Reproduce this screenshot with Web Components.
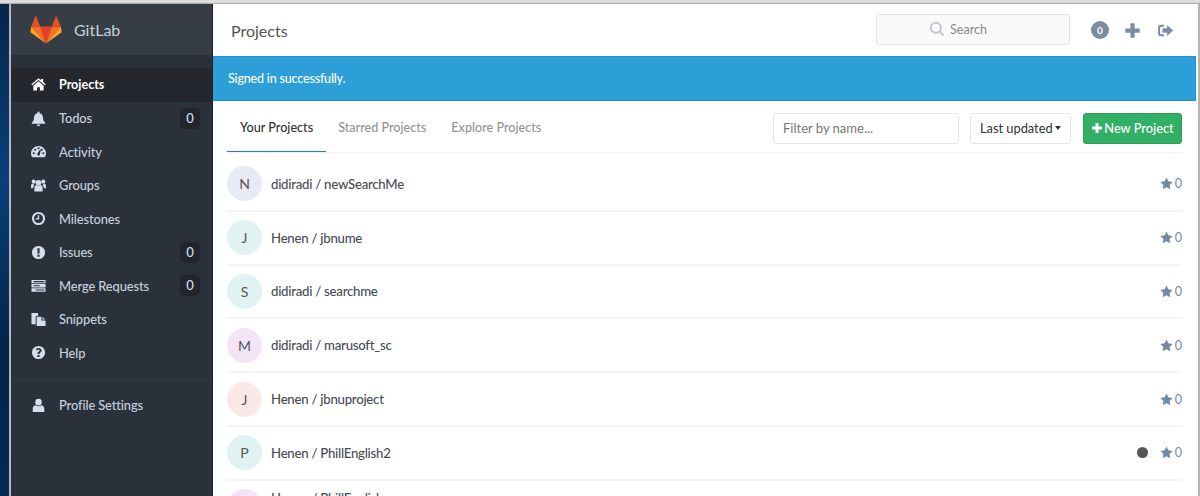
<!DOCTYPE html>
<html>
<head>
<meta charset="utf-8">
<title>Projects</title>
<style>
  html, body { margin: 0; height: 100%; overflow: hidden; background: #fff; }
  body { font-family: "Lato", "Liberation Sans", sans-serif; }
</style>
</head>
<body>
<gl-app></gl-app>
<script>
const ICONS = {
  home: '<path d="M8 1.200 0.300 7.800l1 1.100L8 3.100l6.700 5.800 1-1.100-2.800-2.400V2h-2.200v1.500z"/><path d="M2.500 9.400 8 4.600l5.500 4.800V14.500H9.500v-3.600h-3v3.600H2.500z"/>',
  bell: '<path d="M8 .6a1.100 1.100 0 0 1 1.100 1.100v.6c2.400.5 3.700 2.400 3.700 4.900 0 2.900.9 4 2.400 5.300v1H.8v-1c1.500-1.300 2.400-2.400 2.400-5.300 0-2.500 1.300-4.400 3.700-4.900v-.6A1.100 1.100 0 0 1 8 .6z"/><path d="M6.200 14.300h3.600a1.800 1.800 0 0 1-3.600 0z"/>',
  gauge: '<path fill-rule="evenodd" d="M8 2C3.600 2 0 5.500 0 9.900c0 1.300.3 2.500.9 3.600.1.300.4.500.8.500h12.600c.4 0 .7-.2.800-.5.600-1.100.9-2.300.9-3.600C16 5.500 12.400 2 8 2zM2.900 10.900a1.100 1.100 0 1 1 0-2.200 1.100 1.100 0 0 1 0 2.200zm1.500-3.600a1.100 1.100 0 1 1 0-2.200 1.100 1.100 0 0 1 0 2.200zM8 5.700a1.100 1.100 0 1 1 0-2.200 1.100 1.100 0 0 1 0 2.200zm1.300 6.300a1.600 1.600 0 0 1-2.500-1.900l3-4.500.9.300-1.300 5.300c.2.300.1.600-.1.800zm2.300-4.700a1.100 1.100 0 1 1 0-2.200 1.100 1.100 0 0 1 0 2.200zm1.500 3.600a1.100 1.100 0 1 1 0-2.200 1.100 1.100 0 0 1 0 2.200z"/>',
  users: '<circle cx="8" cy="5" r="3"/><circle cx="2.900" cy="3.900" r="2.200"/><circle cx="13.100" cy="3.900" r="2.200"/><path d="M3.600 14.500V10.500c0-2 1.200-3 2.400-3 .5.500 1.200.8 2 .8s1.500-.3 2-.8c1.200 0 2.400 1 2.400 3v4z"/><path d="M0 11V8.100C0 6.800.8 6 1.700 6c.4.400.9.600 1.500.6.200.5.300 1 .3 1.400-.9.600-1.300 1.600-1.300 3zM16 11V8.100c0-1.300-.8-2.100-1.700-2.100-.4.400-.9.600-1.500.6-.2.500-.3 1-.3 1.400.9.600 1.300 1.600 1.300 3z"/>',
  clock: '<path fill-rule="evenodd" d="M8 1a7 7 0 1 0 0 14A7 7 0 0 0 8 1zm0 2.200a4.800 4.800 0 1 1 0 9.600 4.800 4.800 0 0 1 0-9.600z"/><path d="M7.200 4.600h1.500v4.400H5V7.600h2.200z"/>',
  issue: '<path fill-rule="evenodd" d="M8 1a7 7 0 1 0 0 14A7 7 0 0 0 8 1zM6.800 3.500h2.400l-.2 5.900H7zM6.800 10.300h2.400v2.200H6.800z"/>',
  list: '<path fill-rule="evenodd" d="M.5 2h15v3.700H.5zm2.200 1.300v1.100h11.500V3.300zM.5 6.500h15v3.700H.5zm2.200 1.300v1.100h6.500V7.800zM.5 11h15v3.700H.5zm4.500 1.300v1.100h9.200v-1.100z"/>',
  copy: '<path d="M.5 1h7v3.200H5V13H.5z"/><path d="M6 5h5.200v4h4.300v6H6z"/><path d="M12.300 5.200l3 2.800h-3z"/>',
  question: '<path fill-rule="evenodd" d="M8 1a7 7 0 1 0 0 14A7 7 0 0 0 8 1zM6.900 10.600h2.200v2.100H6.900zM9 9.600H7v-.7c0-1.900 2.100-2 2.100-3.100 0-.5-.5-.9-1.100-.9-.6 0-1.100.4-1.500 1L5 4.800C5.700 3.700 6.800 3.100 8.100 3.100c1.700 0 3.200 1.100 3.200 2.700 0 2.300-2.300 2.300-2.300 3.800z"/>',
  user: '<circle cx="8" cy="4.400" r="3.500"/><path d="M1.800 14.800v-3c0-2.300 1.500-4 3.200-4 .8.700 1.900 1.100 3 1.100s2.200-.4 3-1.100c1.700 0 3.200 1.700 3.200 4v3z"/>',
  search: '<path fill-rule="evenodd" d="M6.800.8a6 6 0 1 0 3.500 10.900l3.400 3.400 1.500-1.500-3.400-3.400A6 6 0 0 0 6.800.8zm0 2a4 4 0 1 1 0 8 4 4 0 0 1 0-8z"/>',
  plus: '<path d="M6 1.200h4V6h4.800v4H10v4.800H6V10H1.200V6H6z"/>',
  signout: '<path d="M6.500 2.500H3.700A2.700 2.700 0 0 0 1 5.200v5.600a2.700 2.700 0 0 0 2.700 2.700h2.800v-1.900H3.900a1 1 0 0 1-1-1V5.400a1 1 0 0 1 1-1h2.600z"/><path d="M9.500 2.800 15.200 8l-5.700 5.200v-3H5.200V5.800h4.300z"/>',
  star: '<path d="M8 .5l2.300 4.800 5.300.8-3.800 3.700.9 5.300L8 12.600l-4.700 2.500.9-5.300L.4 6.100l5.300-.8z"/>'
};

function svgIcon(name, size) {
  return `<svg width="${size}" height="${size}" viewBox="0 0 16 16" fill="currentColor" aria-hidden="true">${ICONS[name]}</svg>`;
}

class GlNavItem extends HTMLElement {
  constructor() {
    super();
    const badge = this.getAttribute("badge");
    this.attachShadow({ mode: "open" }).innerHTML = `
      <style>
        :host {
          display: flex;
          align-items: center;
          height: 33.5px;
          padding: 0 12px 0 20px;
          color: #c5d0de;
          font-size: 12.900px;
          font-weight: 500;
          letter-spacing: -0.12px;
        }
        :host([active]) {
          background: #24272d;
          color: #fff;
          font-weight: 700;
          font-size: 12.500px;
          letter-spacing: 0;
        }
        .icon { width: 15px; display: flex; justify-content: center; margin-right: 13px; color: #d5deeb; }
        :host([active]) .icon { color: #fff; }
        .label { flex: 1; }
        .badge {
          width: 20px;
          height: 21px;
          line-height: 21px;
          text-align: center;
          border-radius: 5px;
          background: #22262c;
          color: #d5deeb;
          font-size: 13px;
        }
      </style>
      <span class="icon">${svgIcon(this.getAttribute("icon"), 15)}</span>
      <span class="label"><slot></slot></span>
      ${badge ? `<span class="badge">${badge}</span>` : ""}
    `;
  }
}
customElements.define("gl-nav-item", GlNavItem);

class GlSidebar extends HTMLElement {
  constructor() {
    super();
    this.attachShadow({ mode: "open" }).innerHTML = `
      <style>
        :host {
          display: flex;
          flex-direction: column;
          box-sizing: border-box;
          width: 202px;
          flex: none;
          background: #2b313a;
          border-right: 1px solid #1c2026;
        }
        .brand {
          display: flex;
          align-items: center;
          height: 51px;
          padding-left: 19px;
          gap: 12px;
          background: #363d47;
          color: #c5d0de;
          font-size: 16px;
        }
        nav { padding-top: 13px; }
      </style>
      <div class="brand">
        <svg width="32" height="29" viewBox="0 0 33 30" aria-hidden="true">
          <path fill="#e24329" d="M16.500 29.500 10.500 12h12z"/>
          <path fill="#fc6d26" d="M16.500 29.500 1.200 12H10.500z"/>
          <path fill="#fc6d26" d="M16.500 29.500 31.800 12H22.500z"/>
          <path fill="#fca326" d="M16.500 29.500 0.300 17.800 1.200 12z"/>
          <path fill="#fca326" d="M16.500 29.500 32.700 17.800 31.800 12z"/>
          <path fill="#e8501f" d="M1.200 12 6 .5 10.500 12zM31.800 12 27 .5 22.500 12z"/>
        </svg>
        <span>GitLab</span>
      </div>
      <nav>
        <slot></slot>
      </nav>
    `;
  }
}
customElements.define("gl-sidebar", GlSidebar);

class GlHeader extends HTMLElement {
  constructor() {
    super();
    this.attachShadow({ mode: "open" }).innerHTML = `
      <style>
        :host {
          display: flex;
          align-items: center;
          height: 52px;
          padding: 0 24px 0 18px;
          background: #fff;
        }
        h1 { flex: 1; margin: 0; font-size: 16px; font-weight: 400; color: #555; }
        .search {
          display: flex;
          align-items: center;
          justify-content: center;
          gap: 5px;
          box-sizing: border-box;
          width: 194px;
          height: 31px;
          margin-bottom: 2px;
          padding-right: 30px;
          background: #fafafa;
          border: 1px solid #e5e5e5;
          border-radius: 3px;
          color: #888;
          font-size: 12.500px;
          margin-right: 21px;
        }
        .search svg { color: #c5c9cf; }
        .count {
          width: 18px;
          height: 18px;
          line-height: 18px;
          border-radius: 50%;
          background: #7e8ca0;
          color: #fff;
          text-align: center;
          font-size: 10px;
          font-weight: 700;
          margin-right: 15px;
        }
        .action { color: #7e8ca0; display: flex; }
        .plus { margin-right: 16px; }
      </style>
      <h1>Projects</h1>
      <div class="search">${svgIcon("search", 16)}<span>Search</span></div>
      <span class="count">0</span>
      <span class="action plus">${svgIcon("plus", 17)}</span>
      <span class="action">${svgIcon("signout", 17)}</span>
    `;
  }
}
customElements.define("gl-header", GlHeader);

class GlFlash extends HTMLElement {
  constructor() {
    super();
    this.attachShadow({ mode: "open" }).innerHTML = `
      <style>
        :host {
          display: flex;
          align-items: center;
          box-sizing: border-box;
          height: 45px;
          margin-right: 2px;
          padding-left: 15px;
          background: #2d9fd8;
          border-top: 1px solid #1f8fcf;
          border-bottom: 1px solid #1f8fcf;
          border-right: 1px solid #1f8fcf;
          color: #fff;
          font-size: 12.500px;
          font-weight: 500;
          letter-spacing: -0.18px;
        }
      </style>
      <slot></slot>
    `;
  }
}
customElements.define("gl-flash", GlFlash);

class GlTabs extends HTMLElement {
  constructor() {
    super();
    this.attachShadow({ mode: "open" }).innerHTML = `
      <style>
        :host {
          display: flex;
          align-items: stretch;
          height: 51px;
          margin: 0 16px 5px 14px;
          border-bottom: 1px solid #f0f0f0;
        }
        .tabs { display: flex; flex: 1; font-size: 12.600px; font-weight: 500; }
        .tab { display: flex; align-items: center; padding: 2px 13px 0 12px; color: #959494; }
        .tab.on { color: #333; padding: 2px 13px 0; border-bottom: 1px solid #1877f2; }
        .tools { display: flex; align-items: center; padding-top: 3px; }
        .filter {
          box-sizing: border-box;
          width: 186px;
          height: 31px;
          padding-left: 9px;
          line-height: 29px;
          border: 1px solid #e5e5e5;
          border-radius: 3px;
          color: #777;
          font-size: 13px;
          margin-right: 11px;
        }
        .sort {
          display: flex;
          align-items: center;
          box-sizing: border-box;
          width: 101px;
          height: 31px;
          padding: 0 9px;
          gap: 2px;
          border: 1px solid #e5e5e5;
          border-radius: 3px;
          color: #313236;
          font-size: 12.800px;
          margin-right: 12px;
          white-space: nowrap;
        }
        .caret { border-top: 4px solid #313236; border-left: 3.500px solid transparent; border-right: 3.500px solid transparent; }
        .new {
          display: flex;
          align-items: center;
          justify-content: center;
          gap: 1px;
          box-sizing: border-box;
          width: 99px;
          height: 31px;
          background: #31af64;
          border: 1px solid #2e9f5b;
          border-radius: 3px;
          color: #fff;
          font-size: 12.800px;
          font-weight: 500;
          white-space: nowrap;
        }
      </style>
      <div class="tabs">
        <span class="tab on">Your Projects</span>
        <span class="tab">Starred Projects</span>
        <span class="tab">Explore Projects</span>
      </div>
      <div class="tools">
        <div class="filter">Filter by name...</div>
        <div class="sort">Last updated<span class="caret"></span></div>
        <div class="new">${svgIcon("plus", 12)}New Project</div>
      </div>
    `;
  }
}
customElements.define("gl-tabs", GlTabs);

class GlProject extends HTMLElement {
  constructor() {
    super();
    const dot = this.hasAttribute("dot");
    this.attachShadow({ mode: "open" }).innerHTML = `
      <style>
        :host {
          display: flex;
          align-items: center;
          box-sizing: border-box;
          height: 53.800px;
          margin: 0 16px 0 14px;
          border-bottom: 2px solid #f4f4f4;
          color: #4a4d55;
          font-size: 13.200px;
          font-weight: 500;
        }
        /* rows with a description keep the name on the upper line */
        :host([described]) .name { padding-bottom: 18px; }
        .avatar {
          width: 35px;
          height: 35px;
          line-height: 35px;
          border-radius: 50%;
          text-align: center;
          background: ${this.getAttribute("color")};
          color: #555;
          font-size: 14px;
          font-weight: 400;
          margin-right: 9px;
          flex: none;
        }
        .name { flex: 1; letter-spacing: -0.25px; }
        .dot { width: 11px; height: 11px; border-radius: 50%; background: #555; margin-right: 12px; }
        .stars { display: flex; align-items: center; gap: 2px; color: #7489a8; font-size: 12.500px; font-weight: 400; }
      </style>
      <span class="avatar">${this.getAttribute("letter")}</span>
      <span class="name"><slot></slot></span>
      ${dot ? '<span class="dot"></span>' : ""}
      <span class="stars">${svgIcon("star", 13)}0</span>
    `;
  }
}
customElements.define("gl-project", GlProject);

class GlApp extends HTMLElement {
  constructor() {
    super();
    this.attachShadow({ mode: "open" }).innerHTML = `
      <style>
        :host {
          display: block;
          width: 1200px;
          height: 496px;
          overflow: hidden;
          background: #d8d8d8;
        }
        .top { box-sizing: border-box; height: 4px; background: #dcdcdc; border-bottom: 1px solid #a8a8a8; }
        .row { display: flex; height: 492px; }
        .desktop { width: 9px; flex: none; background: linear-gradient(#06254c, #0a3f78 35%, #03244a 70%, #042a55); border-right: 2px solid #b4b8bc; }
        .main { flex: 1; background: #fff; overflow: hidden; }
        .edge { width: 2px; flex: none; background: #b5b5b5; }
        .divider { height: 1px; background: #343a44; margin: 9px 0; }
      </style>
      <div class="top"></div>
      <div class="row">
        <div class="desktop"></div>
        <gl-sidebar>
          <gl-nav-item icon="home" active>Projects</gl-nav-item>
          <gl-nav-item icon="bell" badge="0">Todos</gl-nav-item>
          <gl-nav-item icon="gauge">Activity</gl-nav-item>
          <gl-nav-item icon="users">Groups</gl-nav-item>
          <gl-nav-item icon="clock">Milestones</gl-nav-item>
          <gl-nav-item icon="issue" badge="0">Issues</gl-nav-item>
          <gl-nav-item icon="list" badge="0">Merge Requests</gl-nav-item>
          <gl-nav-item icon="copy">Snippets</gl-nav-item>
          <gl-nav-item icon="question">Help</gl-nav-item>
          <div class="divider"></div>
          <gl-nav-item icon="user">Profile Settings</gl-nav-item>
        </gl-sidebar>
        <div class="main">
          <gl-header></gl-header>
          <gl-flash>Signed in successfully.</gl-flash>
          <gl-tabs></gl-tabs>
          <gl-project letter="N" color="#e8eaf6">didiradi / newSearchMe</gl-project>
          <gl-project letter="J" color="#e0f2f1">Henen / jbnume</gl-project>
          <gl-project letter="S" color="#e0f2f1">didiradi / searchme</gl-project>
          <gl-project letter="M" color="#f3e5f5">didiradi / marusoft_sc</gl-project>
          <gl-project letter="J" color="#fbe9e7">Henen / jbnuproject</gl-project>
          <gl-project letter="P" color="#e0f2f1" dot>Henen / PhillEnglish2</gl-project>
          <gl-project letter="P" color="#f3e5f5" described>Henen / PhillEnglish</gl-project>
        </div>
        <div class="edge"></div>
      </div>
    `;
  }
}
customElements.define("gl-app", GlApp);
</script>
</body>
</html>
